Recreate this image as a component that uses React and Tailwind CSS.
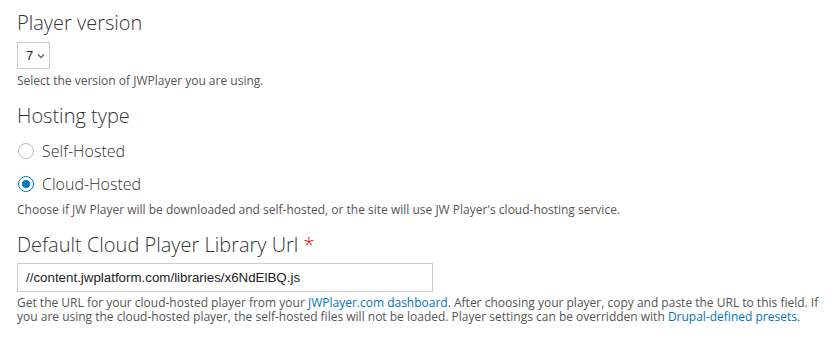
const Radio = ({ checked, label }) => {
  return (
    <label className="flex items-center h-[20px] text-[16px] font-light text-[#333]">
      <span
        className={
          "w-[16px] h-[16px] rounded-full border flex items-center justify-center mr-[8px] ml-[1px] " +
          (checked ? "border-[#0074bd]" : "border-[#bbb]")
        }
      >
        {checked && <span className="w-[8px] h-[8px] rounded-full bg-[#0074bd]" />}
      </span>
      {label}
    </label>
  );
};

const App = () => {
  return (
    <div
      className="bg-white w-[838px] h-[357px] px-[17px] pt-[10px] text-[#555]"
      style={{ fontFamily: '"Open Sans", sans-serif' }}
    >
      <h2 className="text-[20px] font-light leading-[26px] text-[#333]">Player version</h2>
      <div className="mt-[6px] w-[33px] h-[27px] border border-[#ccc] flex items-center pl-[8px] gap-[4px]">
        <span className="text-[13px] text-[#222]" style={{ fontFamily: '"Liberation Sans", sans-serif' }}>
          7
        </span>
        <svg width="8" height="6" viewBox="0 0 8 6" fill="none" stroke="#666" strokeWidth="1.4">
          <path d="M1 1.5 L4 4.5 L7 1.5" />
        </svg>
      </div>
      <p className="text-[12px] leading-[16px] mt-[4px]">Select the version of JWPlayer you are using.</p>

      <h2 className="text-[20px] font-light leading-[26px] text-[#333] mt-[14px]">Hosting type</h2>
      <div className="mt-[12px] flex flex-col gap-[13px]">
        <Radio label="Self-Hosted" />
        <Radio checked label="Cloud-Hosted" />
      </div>
      <p className="text-[12px] leading-[16px] mt-[8px]">
        Choose if JW Player will be downloaded and self-hosted, or the site will use JW Player's cloud-hosting service.
      </p>

      <h2 className="text-[20px] font-light leading-[26px] text-[#333] mt-[14px]">
        Default Cloud Player Library Url <span className="text-[#e00]">*</span>
      </h2>
      <div
        className="mt-[5px] w-[416px] h-[29px] border border-[#ccc] flex items-center px-[8px] text-[13.33px] text-[#222]"
        style={{ fontFamily: '"Liberation Sans", sans-serif' }}
      >
        //content.jwplatform.com/libraries/x6NdElBQ.js
      </div>
      <p className="text-[12px] leading-[14px] mt-[4px] w-[804px]">
        Get the URL for your cloud-hosted player from your{" "}
        <a className="text-[#0074bd]">JWPlayer.com dashboard</a>. After choosing your player, copy and paste the URL to
        this field. If you are using the cloud-hosted player, the self-hosted files will not be loaded. Player settings
        can be overridden with <a className="text-[#0074bd]">Drupal-defined presets</a>.
      </p>
    </div>
  );
};

export default App;
